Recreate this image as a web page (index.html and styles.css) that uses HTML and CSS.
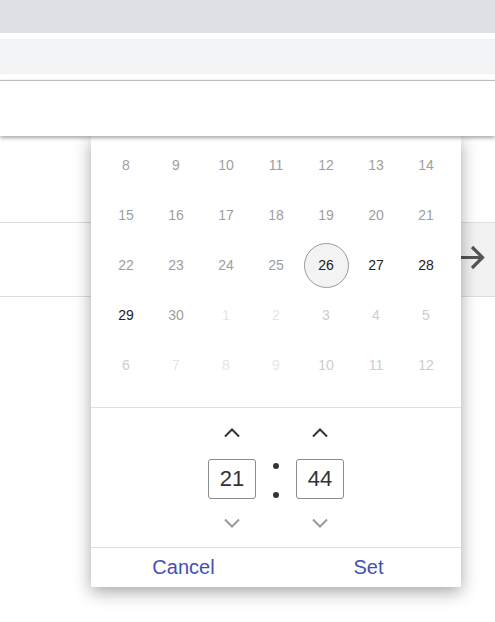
FILE: index.html
```html
<!DOCTYPE html>
<html>
<head>
<meta charset="utf-8">
<link rel="stylesheet" href="styles.css">
</head>
<body>
<div class="tabbar"></div>
<div class="toolbar"></div>
<div class="panel"></div>
<div class="page">
  <div class="spacer"></div>
  <div class="row">
    <div class="row-fill"></div>
    <div class="row-btn">
      <svg class="arrow" width="25" height="25" viewBox="0 0 25 25"><path d="M0 12.5 H21.5 M11 2 L21.5 12.5 L11 23" fill="none" stroke="#555" stroke-width="3.2"/></svg>
    </div>
  </div>

  <div class="popup">
    <div class="grid">
      <span class="d">8</span><span class="d">9</span><span class="d">10</span><span class="d">11</span><span class="d">12</span><span class="d">13</span><span class="d">14</span>
      <span class="d">15</span><span class="d">16</span><span class="d">17</span><span class="d">18</span><span class="d">19</span><span class="d">20</span><span class="d">21</span>
      <span class="d">22</span><span class="d">23</span><span class="d">24</span><span class="d">25</span><span class="d sel"><span class="circle">26</span></span><span class="d on">27</span><span class="d on">28</span>
      <span class="d on">29</span><span class="d">30</span><span class="d x2">1</span><span class="d x2">2</span><span class="d x1">3</span><span class="d x1">4</span><span class="d x1">5</span>
      <span class="d x1">6</span><span class="d x2">7</span><span class="d x2">8</span><span class="d x2">9</span><span class="d x1">10</span><span class="d x1">11</span><span class="d x1">12</span>
    </div>
    <div class="time">
      <div class="tcol">
        <svg class="chev" width="16" height="10" viewBox="0 0 16 10"><path d="M1 8.5 L8 1.5 L15 8.5" fill="none" stroke="#333" stroke-width="2"/></svg>
        <div class="tbox">21</div>
        <svg class="chev down" width="16" height="10" viewBox="0 0 16 10"><path d="M1 1.5 L8 8.5 L15 1.5" fill="none" stroke="#999" stroke-width="2"/></svg>
      </div>
      <div class="colon"><span class="dot"></span><span class="dot"></span></div>
      <div class="tcol">
        <svg class="chev" width="16" height="10" viewBox="0 0 16 10"><path d="M1 8.5 L8 1.5 L15 8.5" fill="none" stroke="#333" stroke-width="2"/></svg>
        <div class="tbox">44</div>
        <svg class="chev down" width="16" height="10" viewBox="0 0 16 10"><path d="M1 1.5 L8 8.5 L15 1.5" fill="none" stroke="#999" stroke-width="2"/></svg>
      </div>
    </div>
    <div class="actions">
      <span class="btn">Cancel</span>
      <span class="btn">Set</span>
    </div>
  </div>
</div>
</body>
</html>
```

FILE: styles.css
```css
html, body {
  margin: 0;
  padding: 0;
  background: #fff;
  width: 495px;
  height: 622px;
  overflow: hidden;
  font-family: "Liberation Sans", Arial, sans-serif;
}
.tabbar {
  height: 33px;
  background: #dee1e6;
  margin-bottom: 6px;
}
.toolbar {
  height: 35px;
  background: #f1f3f4;
  margin-bottom: 6px;
}
.panel {
  position: relative;
  z-index: 3;
  height: 55px;
  background: #fff;
  border-top: 1px solid #bdbdbd;
  box-shadow: 0 2px 4px rgba(0,0,0,0.35);
}
.page {
  position: relative;
}
.spacer {
  height: 86px;
}
.row {
  display: flex;
  height: 73px;
  border-top: 1px solid #dedede;
  border-bottom: 1px solid #dedede;
}
.row-fill {
  flex: 1;
}
.row-btn {
  width: 34px;
  background: #f2f2f2;
  display: flex;
  align-items: flex-start;
  padding-top: 22px;
  box-sizing: border-box;
}
.arrow {
  display: block;
}
.popup {
  position: absolute;
  z-index: 2;
  left: 91px;
  top: 0;
  width: 370px;
  height: 451px;
  background: #fff;
  box-shadow: 0 5px 16px rgba(0,0,0,0.35);
  display: flex;
  flex-direction: column;
}
.grid {
  display: grid;
  grid-template-columns: repeat(7, 50px);
  grid-auto-rows: 50px;
  padding: 4px 10px 17px;
  border-bottom: 1px solid #e0e0e0;
}
.d {
  display: flex;
  align-items: center;
  justify-content: center;
  font-size: 14px;
  color: #9e9e9e;
}
.d.on { color: #222; }
.d.x1 { color: #cdcdcd; }
.d.x2 { color: #e6e6e6; }
.d.sel { color: #222; }
.circle {
  width: 43px;
  height: 43px;
  border: 1px solid #9a9a9a;
  border-radius: 50%;
  background: #f3f3f3;
  display: flex;
  align-items: center;
  justify-content: center;
}
.time {
  height: 139px;
  display: flex;
  justify-content: center;
  align-items: center;
  gap: 17px;
  border-bottom: 1px solid #e0e0e0;
}
.tcol {
  display: flex;
  flex-direction: column;
  align-items: center;
}
.chev {
  display: block;
}
.tbox {
  width: 46px;
  height: 38px;
  border: 1px solid #8a8a8a;
  border-radius: 3px;
  display: flex;
  align-items: center;
  justify-content: center;
  font-size: 22px;
  color: #333;
  margin: 21px 0 19px;
}
.colon {
  display: flex;
  flex-direction: column;
  gap: 23px;
  margin-top: 5px;
}
.dot {
  width: 6px;
  height: 6px;
  border-radius: 50%;
  background: #333;
}
.actions {
  flex: 1;
  display: flex;
}
.btn {
  flex: 1;
  display: flex;
  align-items: center;
  justify-content: center;
  font-size: 20px;
  color: #3f51b5;
}
```
